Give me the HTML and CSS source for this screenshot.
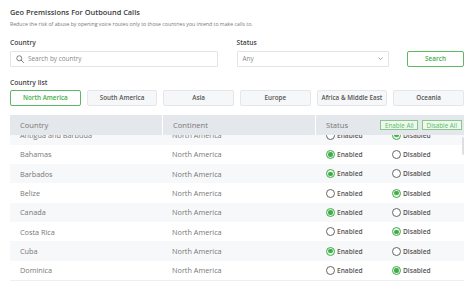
FILE: index.html
```html
<!DOCTYPE html>
<html lang="en">
<head>
    <meta charset="UTF-8">
    <meta name="viewport" content="width=device-width, initial-scale=1.0">
    <title>Geo Permissions</title>
    <link rel="stylesheet" href="styles.css">
</head>
<body>

<div class="page">
    <!-- heading -->
    <div class="page-title">Geo Premissions For Outbound Calls</div>
    <div class="page-sub">Reduce the risk of abuse by opening voice routes only to those countries you intend to make calls to.</div>

    <!-- filters -->
    <div class="filters">
        <div class="field">
            <div class="field-label">Country</div>
            <div class="input">
                <svg class="search-icon" viewBox="0 0 16 16" width="8" height="8">
                    <circle cx="6.5" cy="6.5" r="5" fill="none" stroke="#666" stroke-width="1.6"/>
                    <line x1="10.2" y1="10.2" x2="15" y2="15" stroke="#666" stroke-width="1.8" stroke-linecap="round"/>
                </svg>
                <span class="placeholder">Search by country</span>
            </div>
        </div>
        <div class="field">
            <div class="field-label">Status</div>
            <div class="input select">
                <span class="select-value">Any</span>
                <svg class="chevron" viewBox="0 0 10 6" width="5" height="3">
                    <polyline points="1,1 5,5 9,1" fill="none" stroke="#777" stroke-width="1.3"/>
                </svg>
            </div>
        </div>
        <div class="field">
            <div class="field-label">&nbsp;</div>
            <div class="btn-search">Search</div>
        </div>
    </div>

    <!-- continent tabs -->
    <div class="field-label list-label">Country list</div>
    <div class="tabs">
        <div class="tab active">North America</div>
        <div class="tab">South America</div>
        <div class="tab">Asia</div>
        <div class="tab">Europe</div>
        <div class="tab">Africa &amp; Middle East</div>
        <div class="tab">Oceania</div>
    </div>

    <!-- table -->
    <div class="table">
        <div class="table-head">
            <div class="th">Country</div>
            <div class="th">Continent</div>
            <div class="th th-status">
                <span>Status</span>
                <span class="head-btns">
                    <span class="mini-btn">Enable All</span>
                    <span class="mini-btn">Disable All</span>
                </span>
            </div>
        </div>
        <div class="table-body">
            <div class="rows">
                <div class="row">
                    <div class="td">Antigua and Barbuda</div>
                    <div class="td">North America</div>
                    <div class="td td-status">
                        <span class="radio"><span class="dot"></span>Enabled</span>
                        <span class="radio"><span class="dot on"></span>Disabled</span>
                    </div>
                </div>
                <div class="row">
                    <div class="td">Bahamas</div>
                    <div class="td">North America</div>
                    <div class="td td-status">
                        <span class="radio"><span class="dot on"></span>Enabled</span>
                        <span class="radio"><span class="dot"></span>Disabled</span>
                    </div>
                </div>
                <div class="row">
                    <div class="td">Barbados</div>
                    <div class="td">North America</div>
                    <div class="td td-status">
                        <span class="radio"><span class="dot on"></span>Enabled</span>
                        <span class="radio"><span class="dot"></span>Disabled</span>
                    </div>
                </div>
                <div class="row">
                    <div class="td">Belize</div>
                    <div class="td">North America</div>
                    <div class="td td-status">
                        <span class="radio"><span class="dot"></span>Enabled</span>
                        <span class="radio"><span class="dot on"></span>Disabled</span>
                    </div>
                </div>
                <div class="row">
                    <div class="td">Canada</div>
                    <div class="td">North America</div>
                    <div class="td td-status">
                        <span class="radio"><span class="dot on"></span>Enabled</span>
                        <span class="radio"><span class="dot"></span>Disabled</span>
                    </div>
                </div>
                <div class="row">
                    <div class="td">Costa Rica</div>
                    <div class="td">North America</div>
                    <div class="td td-status">
                        <span class="radio"><span class="dot"></span>Enabled</span>
                        <span class="radio"><span class="dot on"></span>Disabled</span>
                    </div>
                </div>
                <div class="row">
                    <div class="td">Cuba</div>
                    <div class="td">North America</div>
                    <div class="td td-status">
                        <span class="radio"><span class="dot on"></span>Enabled</span>
                        <span class="radio"><span class="dot"></span>Disabled</span>
                    </div>
                </div>
                <div class="row">
                    <div class="td">Dominica</div>
                    <div class="td">North America</div>
                    <div class="td td-status">
                        <span class="radio"><span class="dot"></span>Enabled</span>
                        <span class="radio"><span class="dot on"></span>Disabled</span>
                    </div>
                </div>
            </div>
            <!-- scrollbar thumb sits over the rows -->
            <div class="scroll-thumb"></div>
        </div>
    </div>
</div>

</body>
</html>
```

FILE: styles.css
```css
* {
    margin: 0;
    padding: 0;
    box-sizing: border-box;
}

html, body {
    height: 100%;
    overflow: hidden;
    background: #fff;
    font-family: "Open Sans", "Lato", sans-serif;
    color: #555;
}

/* page wrapper */
.page {
    padding: 7px 10px 0 10px;
}

.page-title {
    font-size: 7.4px;
    line-height: 10px;
    font-weight: 600;
    color: #3a3a3a;
}

.page-sub {
    margin-top: 4px;
    font-size: 5.2px;
    line-height: 7px;
    color: #777;
}

/* filter row */
.filters {
    margin-top: 10px;
    display: grid;
    grid-template-columns: 208px 152px 57px;
    column-gap: 18.5px;
}

.field-label {
    font-size: 6.7px;
    line-height: 9px;
    font-weight: 600;
    color: #444;
    margin-bottom: 4px;
}

.input {
    height: 15.5px;
    border: 1px solid #e2e4e7;
    border-radius: 1px;
    display: flex;
    align-items: center;
    padding: 0 5px;
    font-size: 6.4px;
    color: #888;
}

.search-icon {
    margin-right: 4px;
}

.select {
    justify-content: space-between;
}

.btn-search {
    height: 15.5px;
    border: 1px solid #5cb865;
    border-radius: 2px;
    display: flex;
    align-items: center;
    justify-content: center;
    font-size: 6.4px;
    font-weight: 600;
    color: #3fae49;
}

/* continent tabs */
.list-label {
    margin-top: 11px;
    margin-bottom: 3.5px;
}

.tabs {
    display: grid;
    grid-template-columns: repeat(6, 1fr);
    column-gap: 5.8px;
}

.tab {
    height: 15.5px;
    border: 1px solid #e4e6e9;
    border-radius: 2px;
    background: #f6f7f8;
    display: flex;
    align-items: center;
    justify-content: center;
    font-size: 6.3px;
    font-weight: 600;
    color: #555;
    white-space: nowrap;
}

.tab.active {
    background: #fff;
    border-color: #5cb865;
    color: #3fae49;
}

/* table */
.table {
    margin-top: 9.5px;
    border-bottom: 1px solid #eceef0;
}

.table-head,
.row {
    display: grid;
    grid-template-columns: 152px 153px 1fr;
}

.table-head {
    height: 20px;
    background: #e4e7eb;
}

.th {
    display: flex;
    align-items: center;
    padding-left: 10px;
    font-size: 7.6px;
    color: #777;
    border-left: 1px solid #fff;
}

.th:first-child {
    border-left: none;
}

.th-status {
    justify-content: space-between;
    padding-right: 2.5px;
}

.head-btns {
    display: flex;
    gap: 4px;
}

.mini-btn {
    height: 10.5px;
    padding: 0 3.5px;
    border: 1px solid #84c98a;
    background: #eef8ef;
    display: flex;
    align-items: center;
    font-size: 6.3px;
    color: #5cb865;
}

.table-body {
    position: relative;
    height: 144.5px;
    overflow: hidden;
}

.rows {
    margin-top: -9.5px;
}

.row {
    height: 19.33px;
    align-items: center;
}

.row:nth-child(odd) {
    background: #f7f8f9;
}

.td {
    padding-left: 10px;
    font-size: 7.3px;
    color: #777;
}

.td-status {
    display: grid;
    grid-template-columns: 66px auto;
    padding-left: 11px;
}

.radio {
    display: flex;
    align-items: center;
    gap: 2px;
    font-size: 6.6px;
    font-weight: 600;
    color: #555;
}

.dot {
    width: 9px;
    height: 9px;
    border-radius: 50%;
    border: 1px solid #666;
    background: #fff;
    display: inline-flex;
    align-items: center;
    justify-content: center;
}

.dot.on {
    border-color: #3fae49;
    background: #e8f6ea;
}

.dot.on::after {
    content: "";
    width: 4.5px;
    height: 4.5px;
    border-radius: 50%;
    background: #3fae49;
}

.scroll-thumb {
    position: absolute;
    top: 2px;
    right: 0;
    width: 2.5px;
    height: 18px;
    border-radius: 2px;
    background: #dcdfe3;
}
```
